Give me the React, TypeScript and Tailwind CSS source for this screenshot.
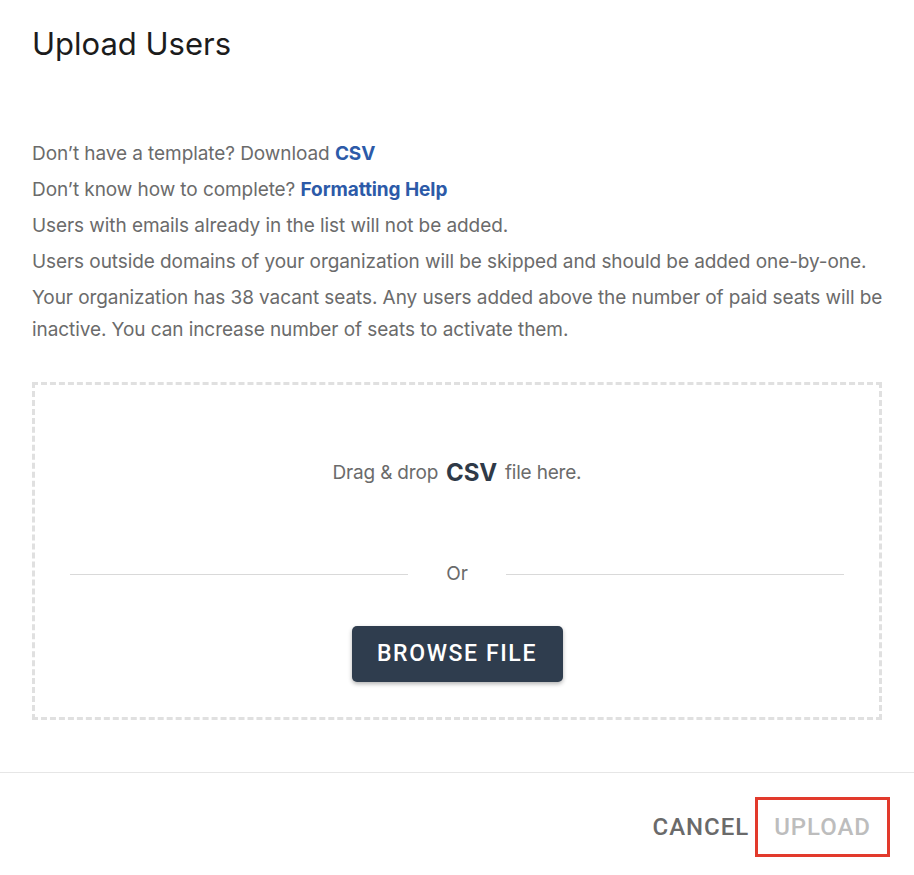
export default function App() {
  return (
    <div className="w-[914px] h-[875px] bg-white font-['Inter',sans-serif] overflow-hidden">
      <div className="px-8 pt-[24px]">
        <h1 className="text-[31px] leading-[40px] text-[#1c1c1c] font-normal">Upload Users</h1>

        <div className="mt-[74px] w-[856px] text-[19px] leading-[32px] tracking-[-0.004em] text-[#6b6b6b] space-y-1">
          <p>
            Don’t have a template? Download{' '}
            <a className="font-bold text-[#2c5aa8]">CSV</a>
          </p>
          <p>
            Don’t know how to complete?{' '}
            <a className="font-bold text-[#2c5aa8]">Formatting Help</a>
          </p>
          <p>Users with emails already in the list will not be added.</p>
          <p>Users outside domains of your organization will be skipped and should be added one-by-one.</p>
          <p>
            Your organization has 38 vacant seats. Any users added above the number of paid seats will be
            inactive. You can increase number of seats to activate them.
          </p>
        </div>

        <div className="mt-[36px] h-[338px] border-[3px] border-dashed border-[#e0e0e0] flex flex-col items-center px-[35px] pt-[72px]">
          <p className="text-[19px] leading-[32px] text-[#6b6b6b] tracking-[-0.01em] flex items-center gap-[8px]">
            <span>Drag &amp; drop</span>
            <span className="text-[24px] font-bold text-[#2f3a48]">CSV</span>
            <span>file here.</span>
          </p>
          <div className="w-full flex items-center gap-[38px] mt-[69px] text-[19px] leading-[32px] text-[#6b6b6b]">
            <div className="flex-1 h-px bg-[#d9d9d9]" />
            <span>Or</span>
            <div className="flex-1 h-px bg-[#d9d9d9]" />
          </div>
          <button className="mt-[36px] w-[211px] h-[56px] rounded-[5px] bg-[#2f3d4e] text-white font-['Roboto',sans-serif] font-medium text-[23px] tracking-[0.07em] shadow-[0_2px_4px_rgba(0,0,0,0.3)]">
            BROWSE FILE
          </button>
        </div>
      </div>

      <div className="mt-[52px] h-px bg-[#e6e6e6]" />

      <div className="flex justify-end items-center pr-[24px] pt-[24px] font-['Roboto',sans-serif] font-medium text-[24px] tracking-[0.04em]">
        <button className="px-[4px] h-[60px] text-[#6a6a6a] mr-[2px]">CANCEL</button>
        <button className="px-[16px] h-[60px] border-[3px] border-[#e23a2c] text-[#bdbdbd]">UPLOAD</button>
      </div>
    </div>
  );
}
